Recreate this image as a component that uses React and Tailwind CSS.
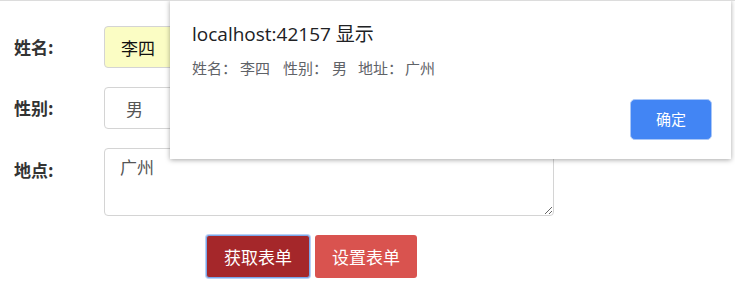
import React from 'react';

const cjk = { fontFamily: '"Noto Sans CJK SC", "Noto Sans", sans-serif' };

export default function App() {
  return (
    <div className="relative w-[735px] h-[293px] bg-white border-t border-[#dcdcdc] overflow-hidden" style={cjk}>
      {/* form */}
      <form className="pt-[25px] flex flex-col gap-[19px]" onSubmit={(e) => e.preventDefault()}>
        <div className="flex items-center">
          <label className="w-[104px] pl-[14px] text-[17px] font-bold text-[#333]">姓名:</label>
          <input
            defaultValue="李四"
            className="w-[450px] h-[42px] pl-[16px] rounded-[4px] border border-[#d4d4d4] bg-[#fbfdc4] text-[17px] text-[#111] outline-none"
          />
        </div>
        <div className="flex items-center">
          <label className="w-[104px] pl-[14px] text-[17px] font-bold text-[#333]">性别:</label>
          <input
            defaultValue="男"
            className="w-[450px] h-[42px] pl-[21px] rounded-[4px] border border-[#d4d4d4] bg-white text-[17px] text-[#555] outline-none"
          />
        </div>
        <div className="flex items-start">
          <label className="w-[104px] pl-[14px] pt-[9px] text-[17px] font-bold text-[#333]">地点:</label>
          <textarea
            defaultValue="广州"
            className="w-[450px] h-[68px] pl-[15px] pt-[8px] rounded-[4px] border border-[#d4d4d4] bg-white text-[17px] leading-[20px] text-[#555] outline-none"
          />
        </div>
        <div className="flex gap-[5px] pl-[206px]">
          <button className="w-[104px] h-[43px] rounded-[3px] border border-[#7aa7ea] bg-[#a5272a] text-white text-[17px] shadow-[0_0_0_1px_#b9d1f5]">
            获取表单
          </button>
          <button className="w-[102px] h-[43px] rounded-[3px] bg-[#d9534f] text-white text-[17px]">
            设置表单
          </button>
        </div>
      </form>

      {/* alert dialog */}
      <div className="absolute left-[170px] top-[-1px] w-[561px] h-[159px] bg-white shadow-[0_1px_5px_rgba(0,0,0,0.35)] pl-[22px] pr-[19px] pt-[21px] flex flex-col">
        <div className="text-[19px] leading-[26px] text-[#202124]" style={{ fontFamily: '"Open Sans", "Noto Sans CJK SC", sans-serif' }}>
          localhost:42157 显示
        </div>
        <div className="mt-[11px] flex text-[15px] leading-[20px] text-[#5f6368]">
          <span>姓名：</span>
          <span className="ml-[3px]">李四</span>
          <span className="ml-[13px]">性别：</span>
          <span className="ml-[4px]">男</span>
          <span className="ml-[11px]">地址：</span>
          <span className="ml-[2px]">广州</span>
        </div>
        <div className="mt-[21px] flex justify-end">
          <button className="w-[82px] h-[41px] rounded-[5px] bg-[#4285f4] border border-[#a9c7f8] text-white text-[15px]">
            确定
          </button>
        </div>
      </div>
    </div>
  );
}
